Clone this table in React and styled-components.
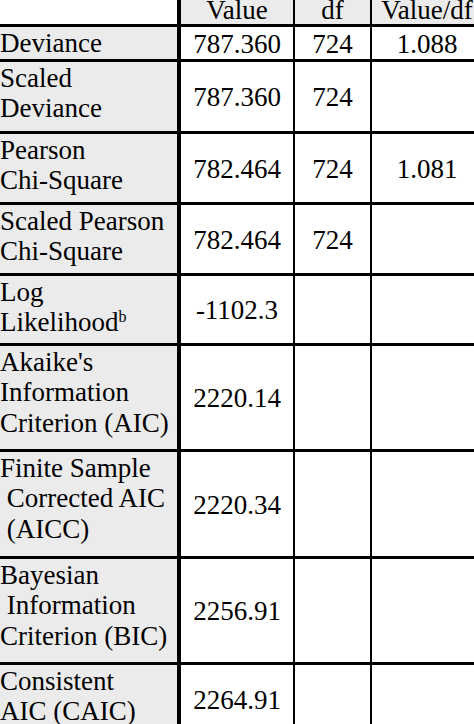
import React from "react";
import styled, { createGlobalStyle } from "styled-components";

const GlobalStyle = createGlobalStyle`
  html, body {
    margin: 0;
    padding: 0;
    background: #ffffff;
  }
  body {
    overflow: hidden;
  }
`;

const Sheet = styled.div`
  width: 474px;
  height: 724px;
  overflow: hidden;
  background: #ffffff;
`;

const StatsTable = styled.table`
  border-collapse: separate;
  border-spacing: 0;
  table-layout: fixed;
  width: 482px;
  margin-top: -7px;
  font-family: "Liberation Serif", "Times New Roman", serif;
  font-size: 27px;
  line-height: 30.7px;
  color: #000000;
`;

const Row = styled.tr`
  height: ${(p) => p.$h}px;
`;

const cellBase = `
  box-sizing: border-box;
  padding: 0;
  font-weight: normal;
  border-bottom: 3px solid #000;
  white-space: nowrap;
  overflow: hidden;
`;

const HeadCell = styled.th`
  ${cellBase}
  width: ${(p) => p.$w}px;
  padding-top: 5px;
  line-height: 24px;
  background: ${(p) => (p.$blank ? "#ffffff" : "#ebebeb")};
  border-right: ${(p) => p.$edge}px solid #000;
  text-align: center;
  vertical-align: top;
`;

const LabelCell = styled.th`
  ${cellBase}
  padding-top: 1px;
  background: #ebebeb;
  border-right: 4px solid #000;
  text-align: left;
  vertical-align: top;
`;

const ValueCell = styled.td`
  ${cellBase}
  padding-top: 2px;
  line-height: 26px;
  background: #ffffff;
  border-right: ${(p) => p.$edge}px solid #000;
  text-align: center;
  vertical-align: middle;
`;

const Line = styled.span`
  display: block;
`;

const Sup = styled.sup`
  font-size: 16px;
  line-height: 0;
  vertical-align: 9px;
`;

const rows = [
  { label: ["Deviance"], value: "787.360", df: "724", ratio: "1.088", h: 34 },
  { label: ["Scaled", "Deviance"], value: "787.360", df: "724", h: 72 },
  { label: ["Pearson", "Chi-Square"], value: "782.464", df: "724", ratio: "1.081", h: 71 },
  { label: ["Scaled Pearson", "Chi-Square"], value: "782.464", df: "724", h: 71 },
  { label: ["Log", "Likelihood"], sup: "b", value: "-1102.3", h: 70 },
  { label: ["Akaike's", "Information", "Criterion (AIC)"], value: "2220.14", h: 106 },
  { label: ["Finite Sample", "\u00a0Corrected AIC", "\u00a0(AICC)"], value: "2220.34", h: 107 },
  { label: ["Bayesian", "\u00a0Information", "Criterion (BIC)"], value: "2256.91", h: 106 },
  { label: ["Consistent", "AIC (CAIC)"], value: "2264.91", h: 71 },
];

export default function App() {
  return (
    <>
      <GlobalStyle />
      <Sheet>
        <StatsTable>
          <thead>
            <Row $h={34}>
              <HeadCell $blank $w={181} $edge={4} />
              <HeadCell $w={114} $edge={2}>Value</HeadCell>
              <HeadCell $w={77} $edge={2}>df</HeadCell>
              <HeadCell $w={110} $edge={0}>Value/df</HeadCell>
            </Row>
          </thead>
          <tbody>
            {rows.map((r, i) => (
              <Row key={i} $h={r.h}>
                <LabelCell scope="row">
                  {r.label.map((t, j) => (
                    <Line key={j}>
                      {t}
                      {r.sup && j === r.label.length - 1 ? <Sup>{r.sup}</Sup> : null}
                    </Line>
                  ))}
                </LabelCell>
                <ValueCell $edge={2}>{r.value}</ValueCell>
                <ValueCell $edge={2}>{r.df || ""}</ValueCell>
                <ValueCell $edge={0}>{r.ratio || ""}</ValueCell>
              </Row>
            ))}
          </tbody>
        </StatsTable>
      </Sheet>
    </>
  );
}
